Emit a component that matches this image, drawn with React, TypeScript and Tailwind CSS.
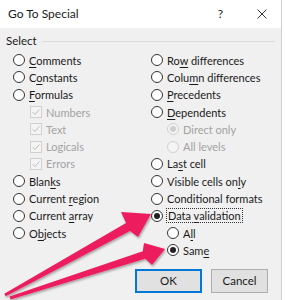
import type { ReactNode } from "react";

function Radio({ checked, disabled }: { checked?: boolean; disabled?: boolean }) {
  return (
    <span
      className={`flex h-[12px] w-[12px] shrink-0 items-center justify-center rounded-full border ${
        disabled ? "border-[#d0d0d0] bg-[#f4f4f4]" : "border-[#333] bg-white"
      }`}
    >
      {checked && (
        <span className={`h-[6px] w-[6px] rounded-full ${disabled ? "bg-[#cfcfcf]" : "bg-[#222]"}`} />
      )}
    </span>
  );
}

function Check() {
  return (
    <span className="flex h-[12px] w-[12px] shrink-0 items-center justify-center border border-[#d0d0d0] bg-[#f4f4f4]">
      <svg viewBox="0 0 12 12" className="h-[10px] w-[10px]">
        <path d="M2 6.2 L4.8 9 L10 3" fill="none" stroke="#bcbcbc" strokeWidth="1.2" />
      </svg>
    </span>
  );
}

function Label({ text, u, disabled, focus }: { text: string; u?: number; disabled?: boolean; focus?: boolean }) {
  let content: ReactNode = text;
  if (u !== undefined) {
    const before = text.slice(0, u);
    const after = text.slice(u + 1);
    content = (
      <>
        {before ? before : null}
        <span className="underline underline-offset-2">{text[u]}</span>
        {after ? after : null}
      </>
    );
  }
  return (
    <span
      className={`whitespace-nowrap leading-none ${disabled ? "text-[#a3a3a3]" : "text-[#1a1a1a]"} ${
        focus ? "outline outline-1 outline-dotted outline-[#333] px-[1px] py-[1px]" : ""
      }`}
    >
      {content}
    </span>
  );
}

type Row = {
  kind: "radio" | "check";
  text: string;
  u?: number;
  sub?: boolean;
  disabled?: boolean;
  checked?: boolean;
  focus?: boolean;
};

const left: Row[] = [
  { kind: "radio", text: "Comments", u: 0 },
  { kind: "radio", text: "Constants", u: 1 },
  { kind: "radio", text: "Formulas", u: 0 },
  { kind: "check", text: "Numbers", sub: true, disabled: true },
  { kind: "check", text: "Text", sub: true, disabled: true },
  { kind: "check", text: "Logicals", sub: true, disabled: true },
  { kind: "check", text: "Errors", sub: true, disabled: true },
  { kind: "radio", text: "Blanks", u: 4 },
  { kind: "radio", text: "Current region", u: 8 },
  { kind: "radio", text: "Current array", u: 8 },
  { kind: "radio", text: "Objects", u: 1 },
];

const right: Row[] = [
  { kind: "radio", text: "Row differences", u: 2 },
  { kind: "radio", text: "Column differences", u: 4 },
  { kind: "radio", text: "Precedents", u: 0 },
  { kind: "radio", text: "Dependents", u: 0 },
  { kind: "radio", text: "Direct only", sub: true, disabled: true, checked: true },
  { kind: "radio", text: "All levels", sub: true, disabled: true },
  { kind: "radio", text: "Last cell", u: 2 },
  { kind: "radio", text: "Visible cells only", u: 16 },
  { kind: "radio", text: "Conditional formats", u: 6 },
  { kind: "radio", text: "Data validation", u: 5, checked: true, focus: true },
  { kind: "radio", text: "All", sub: true, u: 1 },
  { kind: "radio", text: "Same", sub: true, u: 3, checked: true },
];

function Column({ rows, subPad }: { rows: Row[]; subPad: string }) {
  return (
    <div className="flex flex-col">
      {rows.map((r) => (
        <div key={r.text} className={`flex h-[17.3px] items-center gap-[4px] ${r.sub ? subPad : ""}`}>
          {r.kind === "radio" ? <Radio checked={r.checked} disabled={r.disabled} /> : <Check />}
          <Label text={r.text} u={r.u} disabled={r.disabled} focus={r.focus} />
        </div>
      ))}
    </div>
  );
}

function Arrows() {
  return (
    <svg className="pointer-events-none absolute left-0 top-0" width="285" height="300" viewBox="0 0 285 300">
      <defs>
        <filter id="sh" x="-10%" y="-10%" width="120%" height="120%">
          <feDropShadow dx="1" dy="1.5" stdDeviation="1.2" floodColor="#000" floodOpacity="0.35" />
        </filter>
      </defs>
      <g fill="#ec1f5e" filter="url(#sh)">
        <polygon points="4.3,293.7 126,223 121,212 151,214 138,237 130,231 5.7,296.3" />
        <polygon points="9.5,296.6 142.8,251.2 144,243 165,249 152,265 145.2,258.8 10.5,299.4" />
      </g>
    </svg>
  );
}

export default function App() {
  return (
    <div
      className="relative h-[300px] w-[285px] overflow-hidden bg-white text-[11px]"
      style={{ fontFamily: 'Lato, "Noto Sans", sans-serif' }}
    >
      <div className="flex h-[300px] w-[282px] flex-col border-r border-[#cfcfcf]">
        <div className="flex h-[28px] items-center bg-white pl-[8px] pr-[14px] text-[12px] text-[#1a1a1a]">
          <span className="flex-1">Go To Special</span>
          <span className="mr-[34px] text-[12px]">?</span>
          <svg viewBox="0 0 10 10" className="h-[10px] w-[10px]">
            <path d="M0.5 0.5 L9.5 9.5 M9.5 0.5 L0.5 9.5" stroke="#333" strokeWidth="1" />
          </svg>
        </div>
        <div className="flex flex-1 flex-col bg-[#f0f0f0] pb-[7px] pl-[6px] pr-[6px] pt-[6px]">
          <div className="flex h-[14px] items-center gap-[5px]">
            <span className="text-[11.5px] leading-none text-[#1a1a1a]">Select</span>
            <span className="h-px flex-1 bg-[#dcdcdc]" />
          </div>
          <div className="mt-[3.5px] flex">
            <div className="w-[145px] pl-[7px]">
              <Column rows={left} subPad="pl-[17px]" />
            </div>
            <div>
              <Column rows={right} subPad="pl-[16px]" />
            </div>
          </div>
          <div className="mt-auto flex justify-end gap-[9px] pr-[7px]">
            <button className="h-[24px] w-[67px] border border-[#0078d7] bg-[#e1e1e1] text-[11.5px] text-[#1a1a1a] shadow-[inset_0_0_0_1px_#0078d7]">
              OK
            </button>
            <button className="h-[24px] w-[57px] border border-[#adadad] bg-[#e1e1e1] text-[11.5px] text-[#1a1a1a]">
              Cancel
            </button>
          </div>
        </div>
      </div>
      <Arrows />
    </div>
  );
}
